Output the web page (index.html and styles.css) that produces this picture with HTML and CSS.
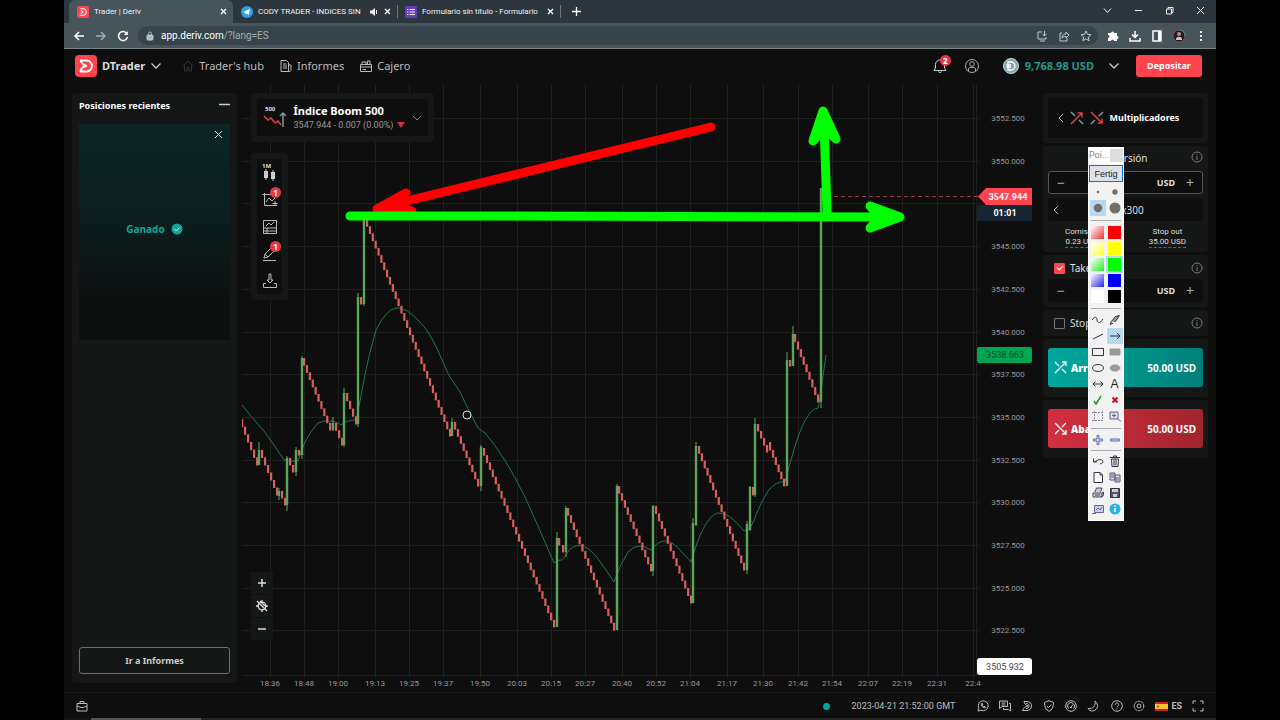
FILE: index.html
```html
<!DOCTYPE html>
<html lang="es">

<head>
    <meta charset="UTF-8">
    <meta name="viewport" content="width=device-width, initial-scale=1.0">
    <title>Trader | Deriv</title>
    <link rel="stylesheet" href="styles.css">
</head>

<body>
    <div class="window">
        <div class="tabs">
            <div class="tab active">
                <svg class="icon" width="12" height="12" viewBox="0 0 22 22"><rect width="22" height="22" rx="4" fill="#ff444f"/><path d="M6 5h5a6 6 0 0 1 0 12H5M7 8l4 3-4 3" fill="none" stroke="#fff" stroke-width="2"/></svg>
                <span class="tab-title">Trader | Deriv</span>
                <button class="tab-close" aria-label="Cerrar"><svg width="7" height="7" viewBox="0 0 7 7"><path d="M1 1l5 5M6 1L1 6"/></svg></button>
            </div>
            <div class="tab">
                <svg class="icon" width="12" height="12" viewBox="0 0 12 12"><circle cx="6" cy="6" r="6" fill="#2ca5e0"/><path d="M2 6l7-3-1.3 6L5.600 7.400 4.500 8.500 4.300 6.800z" fill="#fff"/></svg>
                <span class="tab-title">CODY TRADER - INDICES SIN</span>
                <svg class="icon sound" width="9" height="8" viewBox="0 0 9 8"><path d="M0 2.500h2L5 0v8L2 5.500H0z" fill="#eee"/><path d="M6.500 2v4" stroke="#eee"/></svg>
                <button class="tab-close" aria-label="Cerrar"><svg width="7" height="7" viewBox="0 0 7 7"><path d="M1 1l5 5M6 1L1 6"/></svg></button>
            </div>
            <div class="tab divided">
                <svg class="icon" width="12" height="12" viewBox="0 0 12 12"><rect width="12" height="12" rx="1" fill="#673ab7"/><path d="M4.500 3.500H10M4.500 6H10M4.500 8.500H10" stroke="#fff"/><path d="M2 3.500h1.300M2 6h1.300M2 8.500h1.300" stroke="#fff"/></svg>
                <span class="tab-title">Formulario sin título - Formulario</span>
                <button class="tab-close" aria-label="Cerrar"><svg width="7" height="7" viewBox="0 0 7 7"><path d="M1 1l5 5M6 1L1 6"/></svg></button>
            </div>
            <button class="new-tab" aria-label="Nueva pestaña"><svg width="9" height="9" viewBox="0 0 9 9"><path d="M4.500 0v9M0 4.500h9" stroke="#fff" stroke-width="1.300"/></svg></button>
            <div class="window-buttons">
                <button aria-label="Buscar pestañas"><svg width="9" height="9" viewBox="0 0 9 9"><path d="M1 2.500l3.500 4L8 2.500"/></svg></button>
                <button aria-label="Minimizar"><svg width="9" height="9" viewBox="0 0 9 9"><path d="M1 4.500h7"/></svg></button>
                <button aria-label="Restaurar"><svg width="9" height="9" viewBox="0 0 9 9"><path d="M1.500 3h5v5h-5zM3 3V1.500h5v5H6.500"/></svg></button>
                <button aria-label="Cerrar ventana"><svg width="9" height="9" viewBox="0 0 9 9"><path d="M1 1l7 7M8 1L1 8"/></svg></button>
            </div>
        </div>

        <div class="toolbar">
            <button class="nav-button" aria-label="Atrás"><svg width="12" height="12" viewBox="0 0 12 12"><path d="M11 6H2M6 2L2 6l4 4"/></svg></button>
            <button class="nav-button dim" aria-label="Adelante"><svg width="12" height="12" viewBox="0 0 12 12"><path d="M1 6h9M6 2l4 4-4 4"/></svg></button>
            <button class="nav-button" aria-label="Recargar"><svg width="12" height="12" viewBox="0 0 12 12"><path d="M9.800 3.500A4.500 4.500 0 1 0 10.500 7"/><path d="M10.800 1v4h-4z" fill="#fff" stroke="none"/></svg></button>
            <div class="address">
                <svg width="8" height="10" viewBox="0 0 8 10"><rect x="1" y="4" width="6" height="5" rx="1" fill="#aeb7bb"/><path d="M2.500 4V2.500a1.500 1.500 0 0 1 3 0V4" fill="none" stroke="#aeb7bb"/></svg>
                <span class="url">app.deriv.com<span>/?lang=ES</span></span>
                <button aria-label="Instalar"><svg width="12" height="12" viewBox="0 0 12 12"><path d="M6 2H2v7h8V7M4 11h5M8.500 1v5M6.500 4l2 2 2-2"/></svg></button>
                <button aria-label="Compartir"><svg width="12" height="12" viewBox="0 0 12 12"><path d="M4 3H2v8h7V8M4 8c0-3 2-4 4-4V2l3 3-3 3V6.500C6 6.500 5 7 4 8z"/></svg></button>
                <button aria-label="Favorito"><svg width="12" height="12" viewBox="0 0 12 12"><path d="M6 1l1.500 3.400 3.500.3-2.700 2.400.8 3.600L6 8.800l-3.100 1.900.8-3.600L1 4.700l3.500-.3z"/></svg></button>
            </div>
            <div class="extensions">
                <button aria-label="Extensiones"><svg width="12" height="12" viewBox="0 0 12 12"><path d="M1 3h3a1.500 1.500 0 1 1 3 0h3v3a1.500 1.500 0 1 1 0 3v2H7a1.500 1.500 0 0 0-3 0H1V8a1.500 1.500 0 0 0 0-3z" fill="#fff"/></svg></button>
                <button aria-label="Descargas"><svg width="12" height="12" viewBox="0 0 12 12"><path d="M6 1v6M3 4.500l3 3 3-3M1 8v3h10V8" fill="none" stroke="#fff" stroke-width="1.500"/></svg></button>
                <button aria-label="Panel lateral"><svg width="12" height="12" viewBox="0 0 12 12"><path d="M2 1h8v10H2z" fill="none" stroke="#fff" stroke-width="1.500"/><path d="M7 1h3v10H7z" fill="#fff"/></svg></button>
                <button aria-label="Perfil"><svg width="14" height="14" viewBox="0 0 14 14"><circle cx="7" cy="7" r="6" fill="#251b20" stroke="#8c4760"/><path d="M8 1a6 6 0 0 1 5 6" fill="none" stroke="#3f9a55"/><circle cx="7" cy="5" r="2" fill="#a89090"/><path d="M4 10c0-3 6-3 6 0v1H4z" fill="#c7c0c0"/></svg></button>
                <button aria-label="Menú"><svg width="12" height="12" viewBox="0 0 12 12"><path d="M5 1h2v2H5zM5 5h2v2H5zM5 9h2v2H5z" fill="#fff"/></svg></button>
            </div>
        </div>

        <header class="header">
            <button class="platform">
                <svg width="22" height="22" viewBox="0 0 22 22"><rect width="22" height="22" rx="4" fill="#ff444f"/><path d="M5 5.500h6.500a5.500 5.500 0 0 1 0 11H5M5.500 5.500c1 3 3 4.500 6.500 5.500-3.500 0-5.500 2-7 5.500" fill="none" stroke="#fff" stroke-width="1.800"/></svg>
                <b>DTrader</b>
                <svg width="12" height="12" viewBox="0 0 12 12"><path d="M1.500 3.500L6 8l4.500-4.500" fill="none" stroke="#ccc" stroke-width="1.300"/></svg>
            </button>
            <nav class="menu">
                <a href="#"><svg width="12" height="12" viewBox="0 0 12 12"><path d="M1 6l5-5 5 5M2.500 5v6h2.500V7.500h2V11h2.500V5" fill="none" stroke="#333"/></svg>Trader's hub</a>
                <a href="#"><svg width="12" height="12" viewBox="0 0 12 12"><path d="M1 .5h5.500l2 2v9H1zM8.500 5H11v5.500l-1 1H8.500M3 4h3.500M3 6h4M3 8h4" fill="none" stroke="#bbb"/></svg>Informes</a>
                <a href="#"><svg width="12" height="12" viewBox="0 0 12 12"><path d="M.5 4.500h11v7H.5zM.5 7h11M2 4V2h4v2M7.500 4V1H10v3M2.500 9.500H6" fill="none" stroke="#bbb"/></svg>Cajero</a>
            </nav>
            <div class="account">
                <button class="bell" aria-label="Notificaciones"><svg width="14" height="14" viewBox="0 0 14 14"><path d="M1 11.500h12L11.500 9V5.500a4.500 4.500 0 0 0-9 0V9zM5.500 12.500c0 1.300 3 1.300 3 0" fill="none" stroke="#ccc"/></svg><span class="badge">2</span></button>
                <button aria-label="Cuenta"><svg width="14" height="14" viewBox="0 0 14 14" fill="none" stroke="#aaa"><circle cx="7" cy="7" r="6.500"/><circle cx="7" cy="5" r="2.300"/><path d="M3.500 12V9.500C4 8 10 8 10.500 9.500V12"/></svg></button>
                <button class="balance">
                    <svg width="16" height="16" viewBox="0 0 16 16"><circle cx="8" cy="8" r="7.500" fill="#86a5ad" stroke="#c4d8dc"/><path d="M5 4h3a4 4 0 0 1 0 8H5zM3.500 7H8M3.500 9H8" fill="none" stroke="#fff" stroke-width="1.300"/></svg>
                    <b>9,768.98 USD</b>
                    <svg width="12" height="12" viewBox="0 0 12 12"><path d="M1.500 3.500L6 8l4.500-4.500" fill="none" stroke="#ccc" stroke-width="1.300"/></svg>
                </button>
                <button class="deposit">Depositar</button>
            </div>
        </header>

        <main class="workspace">
            <aside class="positions">
                <div class="positions-head">
                    <h2>Posiciones recientes</h2>
                    <button aria-label="Minimizar"><svg width="11" height="11" viewBox="0 0 11 11"><path d="M0 5.500h11" stroke="#ccc" stroke-width="1.500"/></svg></button>
                </div>
                <div class="contract">
                    <button class="contract-close" aria-label="Cerrar"><svg width="9" height="9" viewBox="0 0 9 9"><path d="M1 1l7 7M8 1L1 8" stroke="#ddd"/></svg></button>
                    <div class="won">Ganado <svg width="12" height="12" viewBox="0 0 12 12"><circle cx="6" cy="6" r="5.500" fill="#12a598"/><path d="M3.500 6.200l1.800 1.800 3.300-3.600" fill="none" stroke="#d8f1ef"/></svg></div>
                </div>
                <button class="reports">Ir a Informes</button>
            </aside>

            <section class="chart">
                <svg id="plot" viewBox="242 84 794 608" preserveAspectRatio="xMinYMin meet">
                    <g id="grid"></g>
                    <path class="average" d="M242 405L250 415L256 422L264 431L274 445L284 460L288 461H298Q302 448 306 440T318 423Q324 420 332 421Q338 422 341 425Q346 420 356 420Q360 402 364 380T376 330Q387 308 397 308Q406 307 420 322Q431 334 439 353T450 377L460 392L469 411L478 428L485 433Q505 456 525 497Q540 530 554 563Q558 559 562 560Q566 556 570 549Q582 539 596 556Q605 568 614 582Q620 564 628 552Q638 541 651 550Q664 533 678 548L691 562Q703 519 717 513Q728 511 744 531L749 529Q752 526 756 515T768 491Q777 480 785 482Q789 466 796 443Q807 409 818 408Q820 400 823 376L826 355"/>
                    <g id="candles"></g>
                    <g id="marks">
                        <path class="spot-line" d="M834 196.500H978"/>
                        <path class="spot-tag" d="M978 196.500L986 188H1032V205H986z"/>
                        <text class="spot-text" x="1008" y="200">3547.944</text>
                        <rect class="timer-tag" x="977" y="205" width="55" height="16"/>
                        <text class="spot-text" x="1005" y="216">01:01</text>
                        <rect class="average-tag" x="977" y="347" width="55" height="16" rx="2"/>
                        <text class="average-text" x="1005" y="358">3538.663</text>
                        <rect class="cross-tag" x="977" y="658" width="55" height="17" rx="3"/>
                        <text class="cross-text" x="1005" y="670">3505.932</text>
                    </g>
                    <g class="arrow red">
                        <path d="M711 127L390 205"/>
                        <path class="head" d="M377 209L406 193L392 206L412 211z"/>
                    </g>
                    <g class="arrow green">
                        <path d="M350 216H487L890 217"/>
                        <path class="head" d="M900 217L870 206L880 217L870 228z"/>
                        <path d="M827 212L824 122"/>
                        <path class="head" d="M823 111L813 141L824 128L836 139z"/>
                    </g>
                    <circle cx="467" cy="415" r="4" fill="none" stroke="#ddd"/>
                </svg>

                <button class="symbol">
                    <svg width="24" height="24" viewBox="0 0 24 24"><text x="2" y="5" class="symbol-tag">500</text><path d="M1 10l4 4 3-2 4 5 3-2 3 4" fill="none" stroke="#e0404c" stroke-width="1.500"/><path d="M20 21V7M17 10l3-3 3 3" fill="none" stroke="#7b9a9f" stroke-width="1.500"/></svg>
                    <span class="symbol-name"><b>Índice Boom 500</b><small>3547.944 - 0.007 (0.00%) <svg width="8" height="6" viewBox="0 0 8 6"><path d="M0 0h8L4 6z" fill="#d03048"/></svg></small></span>
                    <svg width="10" height="10" viewBox="0 0 10 10"><path d="M1 3l4 4 4-4" fill="none" stroke="#888"/></svg>
                </button>

                <div class="tools">
                    <button aria-label="Tipo de gráfico"><svg width="16" height="20" viewBox="0 0 16 20"><text x="0" y="5" class="symbol-tag">1M</text><path d="M2 8h4v7H2zM9 9h4v7H9z" fill="#ccc"/><path d="M4 6v11M11 7v11" stroke="#ccc"/></svg></button>
                    <button aria-label="Indicadores"><svg width="16" height="16" viewBox="0 0 16 16"><path d="M2.500 1v12.500H15M.5 2.500H10M4 10l3-4 3 3 4-4M13 9v5M10.500 11.500h5" fill="none" stroke="#bbb"/></svg><span class="badge">1</span></button>
                    <button aria-label="Plantillas"><svg width="16" height="16" viewBox="0 0 16 16"><path d="M1.500 1.500h13v13h-13zM1.500 9h13M1.500 12h13M5 9v5M4 7l3-3 2 2 3-3" fill="none" stroke="#bbb"/></svg></button>
                    <button aria-label="Dibujar"><svg width="16" height="16" viewBox="0 0 16 16"><path d="M2 12l1-4 7-7 3 3-7 7zM3 8l3 3M1 14.500h13" fill="none" stroke="#bbb"/></svg><span class="badge">1</span></button>
                    <button aria-label="Descargar"><svg width="16" height="16" viewBox="0 0 16 16"><path d="M7 1h2v6h2l-3 3-3-3h2zM4 10.500H1.500v4h13v-4H12" fill="none" stroke="#bbb"/></svg></button>
                </div>

                <div class="zoom">
                    <button aria-label="Acercar"><svg width="10" height="10" viewBox="0 0 10 10"><path d="M5 1v8M1 5h8" stroke="#ddd" stroke-width="1.500"/></svg></button>
                    <button aria-label="Centrar"><svg width="12" height="12" viewBox="0 0 12 12" fill="none" stroke="#ddd" stroke-width="1.300"><circle cx="6" cy="6" r="3.800"/><path d="M1 1l10 10M6 0v2M6 10v2M0 6h2M10 6h2M4 1l5 5"/></svg></button>
                    <button aria-label="Alejar"><svg width="10" height="10" viewBox="0 0 10 10"><path d="M1 5h8" stroke="#ddd" stroke-width="1.500"/></svg></button>
                </div>
            </section>

            <aside class="trade">
                <div class="panel type">
                    <button class="trade-type">
                        <svg width="6" height="10" viewBox="0 0 6 10"><path d="M5 1L1 5l4 4" fill="none" stroke="#bbb"/></svg>
                        <svg width="14" height="14" viewBox="0 0 14 14" fill="none" stroke-width="1.500"><path d="M1 1l4 4M9 9l4 4" stroke="#7b9a9f"/><path d="M1 13L12 2M7.500 2H12v4.500" stroke="#e0404c"/></svg>
                        <svg width="14" height="14" viewBox="0 0 14 14" fill="none" stroke-width="1.500"><path d="M1 13l4-4M9 5l4-4" stroke="#7b9a9f"/><path d="M1 1l11 11M12 7.500V12H7.500" stroke="#e0404c"/></svg>
                        <b>Multiplicadores</b>
                    </button>
                </div>
                <div class="panel stake">
                    <div class="panel-label"><label for="stake">Inversión</label><svg class="info" width="12" height="12" viewBox="0 0 12 12"><circle cx="6" cy="6" r="5"/><path d="M6 5v4M6 3v1"/></svg></div>
                    <div class="stepper framed"><button aria-label="Menos">−</button><input type="text" id="stake"><span>USD</span><button aria-label="Más">+</button></div>
                    <div class="stepper multiplier"><button aria-label="Anterior"><svg width="6" height="10" viewBox="0 0 6 10"><path d="M5 1L1 5l4 4" fill="none" stroke="#bbb"/></svg></button><b>x300</b></div>
                    <div class="fees">
                        <div>Comisión<span>0.23 USD</span></div>
                        <div>Stop out<span>35.00 USD</span></div>
                    </div>
                </div>
                <div class="panel take">
                    <div class="check-row"><input type="checkbox" id="take" checked><label for="take">Take profit</label><svg class="info" width="12" height="12" viewBox="0 0 12 12"><circle cx="6" cy="6" r="5"/><path d="M6 5v4M6 3v1"/></svg></div>
                    <div class="stepper"><button aria-label="Menos">−</button><input type="text" aria-label="Importe de take profit"><span>USD</span><button aria-label="Más">+</button></div>
                </div>
                <div class="panel stop">
                    <div class="check-row"><input type="checkbox" id="stop"><label for="stop">Stop loss</label><svg class="info" width="12" height="12" viewBox="0 0 12 12"><circle cx="6" cy="6" r="5"/><path d="M6 5v4M6 3v1"/></svg></div>
                </div>
                <div class="panel buy">
                    <button class="buy-up"><svg width="13" height="13" viewBox="0 0 13 13"><path d="M1 1l4 4M8 8l4 4M1 12L12 1M8 1h4v4"/></svg><b>Arriba</b><span>50.00 USD</span></button>
                </div>
                <div class="panel buy">
                    <button class="buy-down"><svg width="13" height="13" viewBox="0 0 13 13"><path d="M1 12l4-4M8 5l4-4M1 1l11 11M12 8v4H8"/></svg><b>Abajo</b><span>50.00 USD</span></button>
                </div>

                <div class="pointer">
                    <div class="pointer-title">Poi...<i></i></div>
                    <button class="done">Fertig</button>
                    <div class="cells">
                        <button aria-label="1"><svg width="16" height="16"><circle cx="8" cy="8" r="1.200" fill="#706f68"/></svg></button>
                        <button aria-label="2"><svg width="16" height="16"><circle cx="8" cy="8" r="2.700" fill="#706f68"/></svg></button>
                        <button class="on" aria-label="3"><svg width="16" height="16"><circle cx="8" cy="8" r="4.200" fill="#706f68"/></svg></button>
                        <button aria-label="4"><svg width="16" height="16"><circle cx="8" cy="8" r="5.500" fill="#706f68"/></svg></button>
                    </div>
                    <hr>
                    <div class="cells swatches">
                        <button class="soft-red" aria-label="Rojo claro"></button><button class="full-red" aria-label="Rojo"></button>
                        <button class="soft-yellow" aria-label="Amarillo claro"></button><button class="full-yellow" aria-label="Amarillo"></button>
                        <button class="soft-green" aria-label="Verde claro"></button><button class="full-green" aria-label="Verde"></button>
                        <button class="soft-blue" aria-label="Azul claro"></button><button class="full-blue" aria-label="Azul"></button>
                        <button class="full-white" aria-label="Blanco"></button><button class="full-black" aria-label="Negro"></button>
                    </div>
                    <hr>
                    <div class="cells">
                        <button aria-label="Mano alzada"><svg width="16" height="16"><path d="M2 8c3-4 5-3 5 0s3 4 6-1"/></svg></button>
                        <button aria-label="Marcador"><svg width="16" height="16"><path d="M3.500 10.500l5-6 4-1-4 6-5 3z" fill="#99a"/><path d="M5 10l3 1" stroke="#fff"/></svg></button>
                        <button aria-label="Línea"><svg width="16" height="16"><path d="M3 11l10-5"/></svg></button>
                        <button class="on" aria-label="Flecha"><svg width="16" height="16"><path d="M3 8h10M10 5l3 3-3 3"/></svg></button>
                        <button aria-label="Rectángulo"><svg width="16" height="16"><path d="M2.500 4.500h11v7h-11z"/></svg></button>
                        <button aria-label="Rectángulo relleno"><svg width="16" height="16"><path d="M3 5h10v6H3z" fill="#999" stroke="#999"/></svg></button>
                        <button aria-label="Elipse"><svg width="16" height="16"><ellipse cx="8" cy="8" rx="5.500" ry="3.500"/></svg></button>
                        <button aria-label="Elipse rellena"><svg width="16" height="16"><ellipse cx="8" cy="8" rx="5" ry="3" fill="#999" stroke="#999"/></svg></button>
                        <button aria-label="Doble flecha"><svg width="16" height="16"><path d="M3 8h10M5.500 5.500L3 8l2.500 2.500M10.500 5.500L13 8l-2.500 2.500"/></svg></button>
                        <button class="letter">A</button>
                        <button aria-label="Correcto"><svg width="16" height="16"><path d="M4 9l2 3 5-8" stroke="#1ba01b" stroke-width="1.500"/></svg></button>
                        <button aria-label="Incorrecto"><svg width="16" height="16"><path d="M5.500 5.500l5 5M10.500 5.500l-5 5" stroke="#d01010" stroke-width="2"/></svg></button>
                        <button aria-label="Recortar"><svg width="16" height="16"><path d="M4.500 3v10M12.500 3v10M2 4.500h12M2 12.500h12" stroke="#889" stroke-dasharray="2 1"/></svg></button>
                        <button aria-label="Lupa"><svg width="16" height="16"><path d="M3 4h8v7H3zM5 7.500h4M7 5.500v4M11 11l3 2.500" fill="#dde" stroke="#668"/></svg></button>
                    </div>
                    <hr>
                    <div class="cells">
                        <button aria-label="Añadir"><svg width="16" height="16"><path d="M7 3.500h2V7h3.500v2H9v3.500H7V9H3.500V7H7z" fill="#c8cdf2" stroke="#6670b5"/></svg></button>
                        <button aria-label="Quitar"><svg width="16" height="16"><path d="M3.500 7h9v2h-9z" fill="#c8cdf2" stroke="#6670b5"/></svg></button>
                    </div>
                    <hr class="tight">
                    <div class="cells">
                        <button aria-label="Deshacer"><svg width="16" height="16"><path d="M10 11c5-1 3-6-2-4L4 9M3.500 5.500V9H7"/></svg></button>
                        <button aria-label="Borrar"><svg width="16" height="16"><path d="M4.500 6h7l-.5 7.500H5zM3 4.500h10M6.500 4V3h3v1M7 6.500v6M9 6.500v6"/></svg></button>
                        <button aria-label="Nuevo"><svg width="16" height="16"><path d="M4 3.500h6l2.500 2.500v7.500H4zM10 3.500V6h2.500" fill="#fff"/></svg></button>
                        <button aria-label="Copiar"><svg width="16" height="16"><path d="M3 4h5v7H3zM8 6h5v7H8zM4 6h3M4 8h3M9 9h3M9 11h3" fill="#dde" stroke="#557"/></svg></button>
                        <button aria-label="Imprimir"><svg width="16" height="16"><path d="M3 8h9v4H3zM5 7l1.500-4H12l-1.500 4M5 10h5M12 8l1.500-1v3L12 12" fill="#ccd" stroke="#446"/></svg></button>
                        <button aria-label="Guardar"><svg width="16" height="16"><path d="M3.500 3.500h9v9h-9z" fill="#556" stroke="#334"/><path d="M5 4h6v3H5zM6 9h4v3H6z" fill="#ccd" stroke="none"/></svg></button>
                        <button aria-label="Enviar"><svg width="16" height="16"><path d="M4.500 4.500h9v7h-9z" fill="#cce" stroke="#66a"/><path d="M6 9l2-2 2 2 2-3M2 12.500h4" stroke="#668"/></svg></button>
                        <button aria-label="Ayuda"><svg width="16" height="16"><circle cx="8" cy="8" r="5.500" fill="#2db0e4"/><path d="M8 7v4M8 4.500V6" stroke="#fff" stroke-width="1.500"/></svg></button>
                    </div>
                </div>
            </aside>
        </main>

        <footer class="footer">
            <button aria-label="Posiciones"><svg width="12" height="12" viewBox="0 0 12 12"><path d="M1 3.500h10v7.500H1zM4 3V1.500h4V3M1 6l4 1.500h2L11 6"/></svg></button>
            <span class="online"></span>
            <time>2023-04-21 21:52:00 GMT</time>
            <div class="footer-links">
                <a href="#" aria-label="WhatsApp"><svg width="12" height="12" viewBox="0 0 12 12"><path d="M1 11l.8-2.800A5 5 0 1 1 4 10.300zM4.200 3.500c0 2.500 1.800 4.500 4.200 4.500L8 6.500l-1.200.3-1.300-1.300.3-1.500z"/></svg></a>
                <a href="#" aria-label="Chat"><svg width="12" height="12" viewBox="0 0 12 12"><path d="M.5 1h8v5.500H3L.5 8.500zM10 3.500h1.500V11L9.500 9.500H4.500V8M2.500 3h4M2.500 5h4"/></svg></a>
                <a href="#" aria-label="Deriv"><svg width="12" height="12" viewBox="0 0 12 12"><path d="M3 1.500h3a4.500 4.500 0 0 1 0 9H1.500C2.500 8 4 6.500 7 6 4.500 5 3.500 4 3 1.500zM5 3.500c4 0 4 5 0 5"/></svg></a>
                <a href="#" aria-label="Juego responsable"><svg width="12" height="12" viewBox="0 0 12 12"><path d="M6 .7l4.500 1.800C10.500 7 9 10 6 11.400 3 10 1.500 7 1.500 2.500zM4 6l1.500 1.500L8.500 4.500"/></svg></a>
                <a href="#" aria-label="Límites"><svg width="12" height="12" viewBox="0 0 12 12"><circle cx="6" cy="6" r="5.300"/><path d="M3.500 8.500a3.500 3.500 0 1 1 5 0M6 7l2-2.500M5 7.500h2"/></svg></a>
                <a href="#" aria-label="Tema"><svg width="12" height="12" viewBox="0 0 12 12"><path d="M8 1c4 3 3 9-2 10C3.500 11.200 2 10 1 8.500 6 9 9 6 8 1z"/></svg></a>
                <a href="#" class="help" aria-label="Ayuda"><svg width="12" height="12" viewBox="0 0 12 12"><circle cx="6" cy="6" r="5.300"/><path d="M4.300 4.700c0-2.500 3.500-2.200 3.500 0C7.800 6 6 6 6 7.500M6 8.500v1"/></svg></a>
                <a href="#" aria-label="Ajustes"><svg width="12" height="12" viewBox="0 0 12 12"><circle cx="6" cy="6" r="4.800" stroke-dasharray="2.500 .5"/><circle cx="6" cy="6" r="2"/></svg></a>
                <a href="#" class="language"><svg width="13" height="9" viewBox="0 0 13 9"><path d="M0 0h13v9H0z" fill="#c8202c" stroke="none"/><path d="M0 2h13v5H0z" fill="#f8c52c" stroke="none"/><path d="M2 3.500h2v2H2z" fill="#b4502c" stroke="none"/></svg>ES</a>
                <a href="#" aria-label="Pantalla completa"><svg width="12" height="12" viewBox="0 0 12 12"><path d="M1 4V1h3M8 1h3v3M11 8v3H8M4 11H1V8"/></svg></a>
            </div>
        </footer>
        <div class="bottom-bar"></div>
    </div>

    <script src="chart.js"></script>
</body>

</html>
```

FILE: styles.css
```css
* {
    box-sizing: border-box;
}

body {
    margin: 0;
    background: #000;
    color: #ddd;
    font-family: "Noto Sans", "Open Sans", sans-serif;
    font-size: 11px;
    line-height: 14px;
}

button {
    display: flex;
    align-items: center;
    justify-content: center;
    padding: 0;
    border: none;
    background: none;
    color: inherit;
    font: inherit;
}

a {
    color: inherit;
    text-decoration: none;
}

svg {
    display: block;
    flex: none;
}

.window {
    display: flex;
    flex-direction: column;
    height: 100vh;
    margin: 0 5%;
    background: #0e0e0e;
}

/* browser tabs */
.tabs {
    display: flex;
    height: 23px;
    padding-left: 5px;
    background: #2c363c;
    font-family: Roboto, sans-serif;
    font-size: 8px;
}

.tab {
    display: flex;
    align-items: center;
    gap: 5px;
    width: 164px;
    padding: 0 6px 0 8px;
    color: #f0f2f3;
}

.tab.active {
    background: #46555c;
    border-radius: 6px 6px 0 0;
}

.tab.divided {
    border-left: 1px solid #69757a;
    border-right: 1px solid #69757a;
    height: 13px;
    margin-top: 5px;
    padding-left: 7px;
}

.tab-title {
    flex: 1;
    min-width: 0;
    white-space: nowrap;
}

.tab-close svg {
    stroke: #fff;
    stroke-width: 1.3;
}

.new-tab {
    width: 30px;
}

.window-buttons {
    display: flex;
    margin-left: auto;
    height: 20px;
}

.window-buttons button {
    width: 31px;
}

.window-buttons svg {
    fill: none;
    stroke: #eee;
}

.toolbar {
    display: flex;
    align-items: center;
    height: 26px;
    padding: 0 4px;
    background: #46555c;
    border-bottom: 1px solid #7c8589;
}

.nav-button {
    width: 22px;
}

.nav-button svg {
    fill: none;
    stroke: #fff;
    stroke-width: 1.5;
}

.nav-button.dim {
    opacity: 0.5;
}

.address {
    display: flex;
    flex: 1;
    align-items: center;
    gap: 10px;
    height: 19px;
    margin-left: 4px;
    padding: 0 6px 0 8px;
    border-radius: 10px;
    background: #37444b;
}

.address svg {
    fill: none;
    stroke: #c3cace;
}

.url {
    flex: 1;
    margin-left: -3px;
    color: #fff;
    font-family: Roboto, sans-serif;
    font-size: 10px;
}

.url span {
    color: #a3adb1;
}

.extensions {
    display: flex;
    margin-left: 4px;
}

.extensions button {
    width: 22px;
}

/* application header */
.header {
    display: flex;
    align-items: center;
    height: 33px;
    padding: 0 14px 0 11px;
}

.platform {
    gap: 5px;
}

.menu {
    display: flex;
    gap: 16px;
    margin-left: 20px;
    color: #bbb;
}

.menu a {
    display: flex;
    align-items: center;
    gap: 5px;
}

.account {
    display: flex;
    align-items: center;
    margin-left: auto;
}

.account button {
    position: relative;
    margin-left: 18px;
}

.badge {
    position: absolute;
    top: -4px;
    right: -4px;
    width: 11px;
    height: 11px;
    border-radius: 50%;
    background: #e03a48;
    color: #fff;
    font-size: 8px;
    font-weight: bold;
    line-height: 11px;
    text-align: center;
}

.account .balance {
    gap: 6px;
    margin-left: 24px;
    color: #20998f;
}

.balance svg:last-child {
    margin-left: 8px;
}

.account .deposit {
    width: 66px;
    height: 22px;
    margin-left: 16px;
    border-radius: 3px;
    background: #ff444f;
    color: #fff;
    font-size: 9px;
    font-weight: bold;
}

.workspace {
    display: flex;
    flex: 1;
    min-height: 0;
    padding: 2px 8px 0;
}

/* recent positions */
.positions {
    display: flex;
    flex-direction: column;
    width: 165px;
    margin: 9px 0;
    padding: 6px 7px 9px;
    border-radius: 4px;
    background: #151717;
}

.positions-head {
    display: flex;
    justify-content: space-between;
    height: 25px;
}

.positions-head button {
    height: 11px;
}

.positions h2 {
    margin: 0;
    color: #fff;
    font-size: 9px;
    line-height: 14px;
}

.contract {
    display: flex;
    flex-direction: column;
    align-items: center;
    height: 216px;
    background: linear-gradient(#0b2625, #0b1f1f 40%, #0e1010 80%);
}

.contract-close {
    align-self: flex-end;
    margin: 6px 7px;
}

.won {
    display: flex;
    align-items: center;
    gap: 6px;
    margin-top: 77px;
    color: #12a598;
    font-size: 10px;
    font-weight: bold;
}

.reports {
    height: 27px;
    margin-top: auto;
    border: 1px solid #6e6e6e;
    border-radius: 3px;
    color: #ccc;
    font-size: 9px;
    font-weight: bold;
}

/* chart */
.chart {
    position: relative;
    flex: 1;
    margin-left: 5px;
    min-width: 0;
}

#plot {
    width: 100%;
    height: 100%;
    font-family: Roboto, sans-serif;
    text-anchor: middle;
}

.grid-line {
    stroke: #1e2020;
}

.axis-text {
    fill: #999;
    font-size: 8px;
}

.average {
    fill: none;
    stroke: #1f7548;
}

.up {
    fill: #5aa65a;
}

.down {
    fill: #dc5f5f;
}

.spot-line {
    stroke: #a03840;
    stroke-dasharray: 4 3;
}

.spot-tag {
    fill: #ff444f;
}

.spot-text {
    fill: #fff;
    font-size: 9px;
    font-weight: bold;
}

.timer-tag {
    fill: #182533;
}

.average-tag {
    fill: #00a651;
}

.average-text {
    fill: #0c4c2b;
    font-size: 9px;
}

.cross-tag {
    fill: #fff;
}

.cross-text {
    fill: #444;
    font-size: 9px;
}

.arrow path {
    fill: none;
    stroke-width: 9;
    stroke-linecap: round;
    stroke-linejoin: round;
}

.arrow.red path {
    stroke: #f00;
}

.arrow.green path {
    stroke: #0f0;
}

.arrow.red .head {
    fill: #f00;
}

.arrow.green .head {
    fill: #0f0;
}

.symbol {
    position: absolute;
    top: 9px;
    left: 9px;
    gap: 7px;
    width: 183px;
    height: 49px;
    border: 6px solid #151717;
    border-radius: 4px;
    background: #0e0e0e;
    text-align: left;
}

.symbol-tag {
    fill: #ddd;
    font-size: 6px;
    font-weight: bold;
    text-anchor: start;
}

.symbol-name b,
.symbol-name small {
    display: flex;
    align-items: center;
    gap: 4px;
    white-space: nowrap;
}

.symbol-name b {
    color: #fff;
}

.symbol-name small {
    color: #999;
    font-family: Roboto, sans-serif;
    font-size: 9px;
}

.tools {
    position: absolute;
    top: 69px;
    left: 9px;
    width: 37px;
    border: 6px solid #151717;
    border-radius: 4px;
    background: #0e0e0e;
}

.tools button {
    position: relative;
    width: 100%;
    height: 27px;
}

.tools .badge {
    top: 1px;
    right: 1px;
}

.zoom {
    position: absolute;
    left: 9px;
    bottom: 52px;
    display: grid;
    gap: 1px;
}

.zoom button {
    width: 22px;
    height: 22px;
    background: #151717;
}

/* trade parameters */
.trade {
    position: relative;
    display: flex;
    flex-direction: column;
    gap: 3px;
    width: 165px;
    margin: 9px 0 0 7px;
}

.panel {
    padding: 5px;
    border-radius: 3px;
    background: #151717;
}

.trade-type {
    gap: 6px;
    width: 100%;
    height: 40px;
    padding-right: 14px;
    background: #0e0e0e;
    color: #fff;
    font-size: 9px;
}

.panel.stake {
    padding-bottom: 4px;
}

.panel-label {
    position: relative;
    height: 20px;
    font-size: 10px;
    text-align: center;
}

.info {
    margin-left: auto;
    fill: none;
    stroke: #777;
}

.panel-label .info {
    position: absolute;
    top: 0;
    right: 0;
}

.stepper {
    display: flex;
    align-items: center;
    height: 23px;
    border: 1px solid transparent;
    border-radius: 3px;
    background: #0e0e0e;
    color: #ddd;
    font-size: 9px;
    font-weight: bold;
}

.stepper.framed {
    border-color: #555;
}

.stepper button {
    width: 24px;
    color: #aaa;
    font-size: 14px;
    font-weight: normal;
}

.stepper span {
    margin-right: 3px;
}

.stepper input {
    flex: 1;
    min-width: 0;
    border: none;
    background: none;
}

.stepper.multiplier {
    margin-top: 4px;
}

.multiplier button {
    width: 14px;
}

.multiplier b {
    flex: 1;
    font-size: 10px;
    font-weight: normal;
    text-align: center;
}

.fees {
    display: flex;
    justify-content: space-between;
    padding: 6px 17px 0;
    font-family: Roboto, sans-serif;
    font-size: 8px;
    line-height: 10px;
    text-align: center;
}

.fees span {
    display: block;
    border-bottom: 1px dashed #666;
}

.check-row {
    display: flex;
    align-items: center;
    height: 16px;
    padding-left: 6px;
    font-size: 10px;
}

.check-row input {
    appearance: none;
    width: 11px;
    height: 11px;
    margin: 0 5px 0 0;
    border: 1px solid #777;
    border-radius: 1px;
}

.check-row input:checked {
    position: relative;
    border-color: #ff444f;
    background: #ff444f;
}

.check-row input:checked::after {
    content: "";
    position: absolute;
    top: 1px;
    left: 2px;
    width: 5px;
    height: 3px;
    border: solid #fff;
    border-width: 0 0 1px 1px;
    transform: rotate(-45deg);
}

.take .stepper {
    margin-top: 3px;
}

.panel.buy {
    padding: 9px 5px 10px;
}

.buy button {
    justify-content: flex-start;
    gap: 4px;
    width: 100%;
    height: 39px;
    padding: 0 7px 0 6px;
    border-radius: 3px;
    color: #fff;
    font-size: 10px;
    font-weight: bold;
}

.buy svg {
    fill: none;
    stroke: #fff;
    stroke-width: 1.3;
}

.buy span {
    margin-left: auto;
}

.buy .buy-up {
    background: linear-gradient(90deg, #00a79e, #008079);
}

.buy .buy-down {
    background: linear-gradient(90deg, #d32f40, #a0242f);
}

/* floating pointer palette */
.pointer {
    position: absolute;
    top: 54px;
    left: 45px;
    width: 36px;
    padding-bottom: 3px;
    border: 1px solid #fff;
    border-top: none;
    background: #f2f2f2;
    color: #222;
}

.pointer-title {
    display: flex;
    justify-content: space-between;
    height: 17px;
    background: #fff;
    color: #888;
    font-family: Roboto, sans-serif;
    font-size: 9px;
    line-height: 17px;
}

.pointer-title i {
    width: 13px;
    height: 13px;
    margin-top: 2px;
    background: #ddd;
}

.done {
    width: 100%;
    height: 17px;
    margin: 1px 0 2px;
    border: 1px solid #0078d7;
    background: #dfe1e8;
    font-family: "Liberation Sans", Arial, sans-serif;
    font-size: 9px;
}

.cells {
    display: grid;
    grid-template-columns: 1fr 1fr;
    grid-auto-rows: 16px;
    justify-items: center;
    align-items: center;
}

.cells svg {
    fill: none;
    stroke: #333344;
}

.cells circle {
    stroke: none;
}

.cells .on {
    background: #b8d8f0;
}

.letter {
    font-family: "Liberation Sans", Arial, sans-serif;
    font-size: 12px;
}

.pointer hr {
    height: 1px;
    margin: 4px 2px 3px;
    border: none;
    background: #aaa;
}

.pointer hr.tight {
    margin: 2px;
}

.swatches button {
    width: 13px;
    height: 13px;
}

.soft-red { background: linear-gradient(135deg, #fff, #f03030); }
.full-red { background: #f00; }
.soft-yellow { background: linear-gradient(135deg, #fff, #ff3); }
.full-yellow { background: #ff0; }
.soft-green { background: linear-gradient(135deg, #fff, #2e2); }
.full-green { background: #0f0; outline: 2px solid #b8d8f0; }
.soft-blue { background: linear-gradient(135deg, #fff, #22e); }
.full-blue { background: #00f; }
.full-white { background: #fff; }
.full-black { background: #000; }

/* footer */
.footer {
    display: flex;
    align-items: center;
    height: 26px;
    padding: 1px 12px 0;
    border-top: 1px solid #171919;
    color: #bbb;
    font-family: Roboto, sans-serif;
    font-size: 9px;
}

.footer svg {
    fill: none;
    stroke: #bbb;
}

.online {
    width: 7px;
    height: 7px;
    margin: 0 22px 0 auto;
    border-radius: 50%;
    background: #00a79e;
}

.footer-links {
    display: flex;
    align-items: center;
    gap: 10px;
    margin-left: 22px;
}

.help {
    margin-left: 2px;
}

.language {
    display: flex;
    align-items: center;
    gap: 3px;
    font-weight: bold;
}

.bottom-bar {
    height: 2px;
    background: linear-gradient(90deg, #151515 27px, #555 27px, #555 137px, #252525 137px);
}
```

FILE: chart.js
```js
const SVG = "http://www.w3.org/2000/svg";
const grid = document.getElementById("grid");
const candles = document.getElementById("candles");

const times = [
    [270, "18:36"], [304, "18:48"], [338, "19:00"], [375, "19:13"], [409, "19:25"],
    [443, "19:37"], [480, "19:50"], [517, "20:03"], [551, "20:15"], [585, "20:27"],
    [622, "20:40"], [656, "20:52"], [690, "21:04"], [727, "21:17"], [763, "21:30"],
    [798, "21:42"], [832, "21:54"], [868, "22:07"], [902, "22:19"], [937, "22:31"], [973, "22:4"]
];

// green candles: x, top, bottom, high, low
const rises = [
    [259, 450, 465, 442, 465], [279, 491, 496, 488, 500], [287, 458, 505, 456, 511],
    [296, 450, 472, 447, 476], [302, 358, 455, 356, 459], [333, 423, 430, 417, 431],
    [344, 393, 445, 388, 447], [358, 297, 424, 293, 427], [364, 216, 304, 216, 306],
    [452, 422, 436, 418, 436], [481, 447, 486, 445, 491], [557, 538, 627, 532, 627],
    [566, 508, 552, 506, 557], [617, 486, 630, 484, 630], [653, 506, 571, 505, 576],
    [693, 523, 603, 518, 603], [696, 446, 525, 442, 526], [747, 524, 570, 521, 574],
    [750, 487, 530, 486, 531], [755, 424, 495, 418, 497], [787, 360, 486, 352, 486],
    [793, 334, 366, 326, 366], [821, 188, 402, 188, 408]
];

// falling runs: first x, top, last x, bottom
const falls = [
    [242, 419, 257, 465], [262, 450, 277, 495], [282, 491, 285, 505], [290, 458, 293, 472],
    [299, 450, 299, 455], [304, 358, 330, 430], [336, 423, 342, 445], [347, 393, 356, 424],
    [361, 297, 361, 304], [367, 219, 450, 436], [455, 422, 478, 486], [484, 448, 554, 627],
    [559, 538, 563, 552], [568, 508, 614, 630], [619, 486, 651, 571], [656, 506, 691, 603],
    [699, 446, 744, 570], [753, 487, 753, 495], [758, 424, 767, 452], [770, 442, 770, 450],
    [773, 450, 784, 486], [790, 360, 790, 366], [795, 334, 818, 402]
];

function add(parent, name, attrs, text) {
    const node = document.createElementNS(SVG, name);
    for (const key in attrs) {
        node.setAttribute(key, attrs[key]);
    }
    if (text) {
        node.textContent = text;
    }
    parent.appendChild(node);
}

times.forEach(([x, label]) => {
    add(grid, "path", { class: "grid-line", d: `M${x + 0.5} 84V678` });
    add(grid, "text", { class: "axis-text", x: x, y: 686 }, label);
});

for (let i = 0; i < 13; i++) {
    const y = Math.round(118 + i * 42.7);
    add(grid, "path", { class: "grid-line", d: `M242 ${y + 0.5}H980` });
    // the spot tag covers 3547.500
    if (i !== 2) {
        add(grid, "text", { class: "axis-text", x: 1008, y: y + 3 }, (3552.5 - i * 2.5).toFixed(3));
    }
}
add(grid, "path", { class: "grid-line", d: "M242 675.500H977M976.500 84V676" });

falls.forEach(([x0, top, x1, bottom]) => {
    const steps = Math.round((x1 - x0) / 2.86) + 1;
    const height = (bottom - top) / steps;
    for (let i = 0; i < steps; i++) {
        const x = steps > 1 ? x0 + (x1 - x0) * i / (steps - 1) : x0;
        add(candles, "rect", { class: "down", x: x - 1, y: top + height * i, width: 2.2, height: height + 0.5 });
    }
});

rises.forEach(([x, top, bottom, high, low]) => {
    add(candles, "rect", { class: "up", x: x - 1.2, y: top, width: 2.4, height: bottom - top });
    add(candles, "rect", { class: "up", x: x - 0.5, y: high, width: 1, height: low - high });
});
```
